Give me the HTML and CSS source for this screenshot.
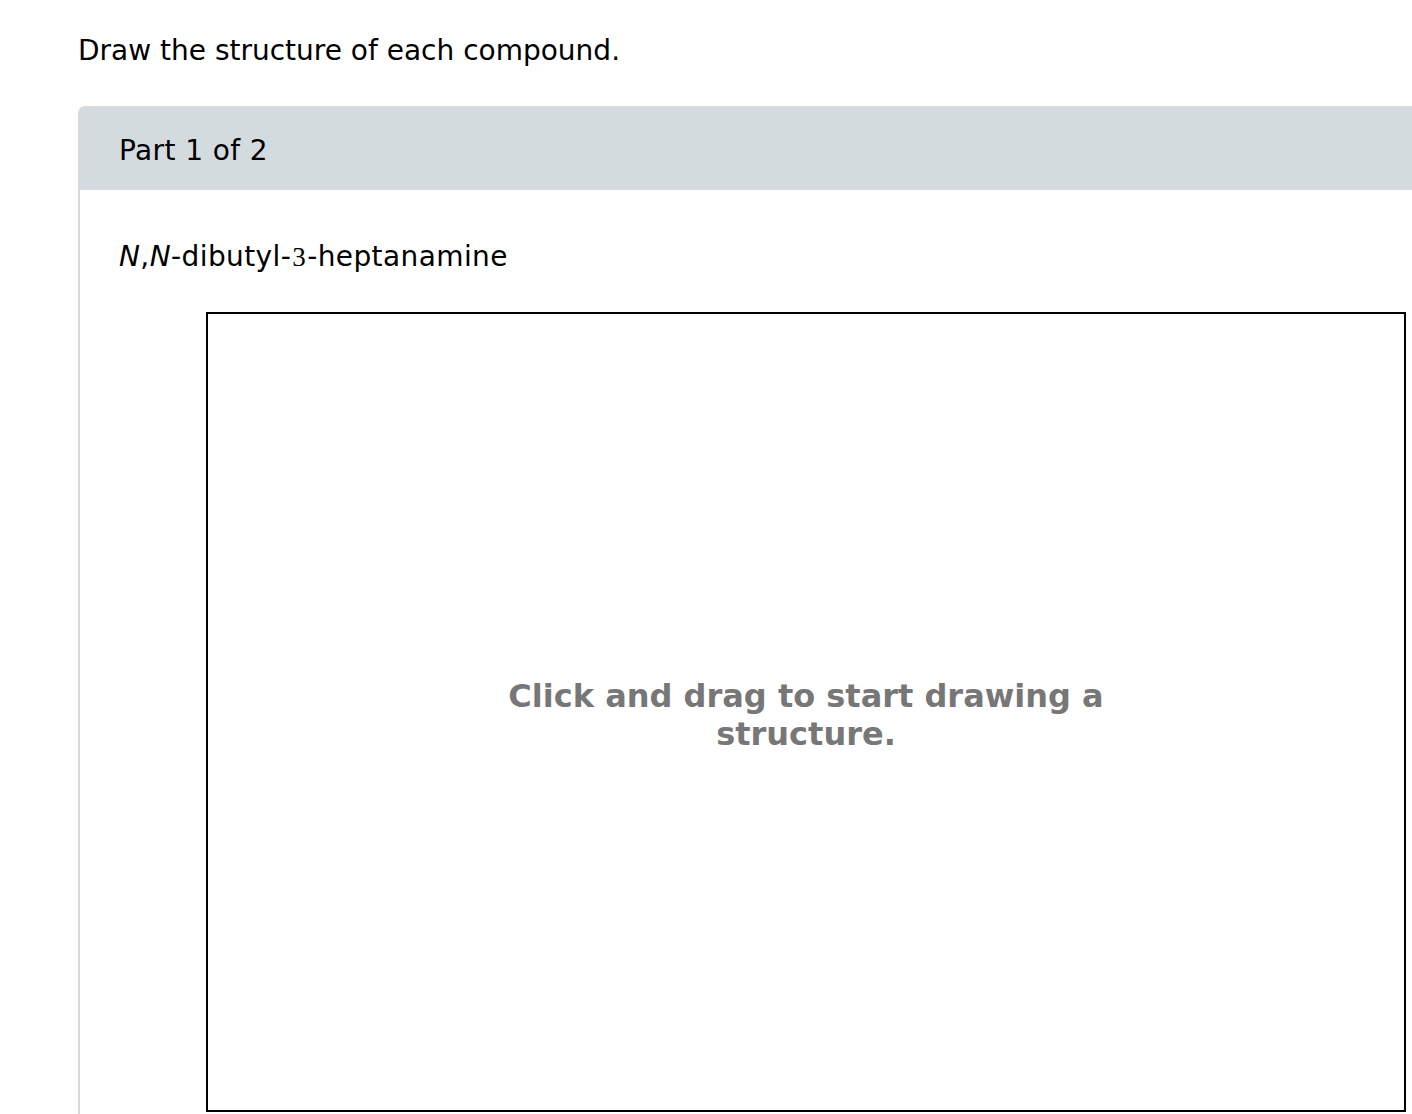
FILE: index.html
```html
<!DOCTYPE html>
<html lang="en">
<head>
<meta charset="utf-8">
<title>Draw the structure of each compound</title>
<link rel="stylesheet" href="styles.css">
</head>
<body>
<div class="page">
  <p class="prompt">Draw the structure of each compound.</p>
  <section class="part">
    <header class="part-head">Part 1 of 2</header>
    <div class="part-body">
      <p class="compound"><i>N</i>,<i>N</i>-dibutyl-<span class="num">3</span>-heptanamine</p>
      <div class="canvas">
        <div class="hint">Click and drag to start drawing a structure.</div>
      </div>
    </div>
  </section>
</div>
</body>
</html>
```

FILE: styles.css
```css
html, body {
  margin: 0;
  padding: 0;
  background: #ffffff;
}
body {
  font-family: "DejaVu Sans", Verdana, sans-serif;
  color: #000000;
  overflow: hidden;
}
.page {
  padding: 35px 0 0 78px;
}
.prompt {
  margin: 0;
  font-size: 28px;
  line-height: 32px;
}
.part {
  margin-top: 39px;
  margin-right: -40px;
}
.part-head {
  background: #d3dbde;
  height: 84px;
  box-sizing: border-box;
  padding: 29px 0 0 41px;
  font-size: 28px;
  line-height: 32px;
  letter-spacing: 0.4px;
  border-top-left-radius: 7px;
}
.part-body {
  border-left: 2px solid #d3dbde;
  padding: 51px 0 40px 39px;
}
.compound {
  margin: 0;
  font-size: 28px;
  line-height: 32px;
  letter-spacing: 0.4px;
}
.compound i {
  font-style: italic;
}
.num {
  font-family: "Liberation Serif", "Times New Roman", serif;
  font-size: 27px;
  padding: 0 1px;
}
.canvas {
  margin: 39px 0 0 87px;
  width: 1200px;
  height: 800px;
  box-sizing: border-box;
  border: 2px solid #000000;
  display: flex;
  align-items: center;
  justify-content: center;
}
.hint {
  width: 620px;
  text-align: center;
  font-weight: bold;
  font-size: 32px;
  line-height: 38px;
  color: #777777;
  margin-top: 6px;
}
```
